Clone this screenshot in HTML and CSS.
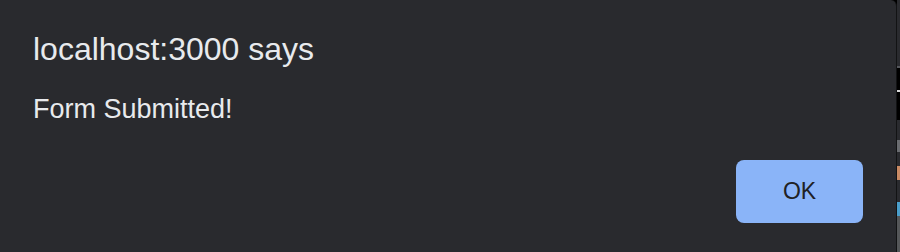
FILE: index.html
```html
<!DOCTYPE html>
<html lang="en">
<head>
    <meta charset="UTF-8">
    <title>localhost:3000 says</title>
    <link rel="stylesheet" href="styles.css">
</head>
<body>
<div class="page">
    <div class="dialog">
        <h1 class="title">localhost:3000 says</h1>
        <p class="message">Form Submitted!</p>
        <div class="buttons">
            <button class="ok">OK</button>
        </div>
    </div>
    <div class="strip">
        <span class="s1"></span>
        <span class="s2"></span>
        <span class="s3"></span>
        <span class="s4"></span>
        <span class="s5"></span>
        <span class="s6"></span>
        <span class="s7"></span>
        <span class="s8"></span>
        <span class="s9"></span>
        <span class="s10"></span>
        <span class="s11"></span>
    </div>
</div>
</body>
</html>
```

FILE: styles.css
```css
* {
    margin: 0;
    padding: 0;
    box-sizing: border-box;
}
body {
    background-color: #000;
    font-family: "Liberation Sans", Arial, sans-serif;
    overflow: hidden;
}
.page {
    display: flex;
    width: 900px;
    height: 252px;
}
.dialog {
    width: 897px;
    height: 252px;
    padding: 0 33px;
    background-color: #292a2e;
    border-right: 1px solid #121314;
    border-top-right-radius: 6px;
    color: #e8eaed;
    display: flex;
    flex-direction: column;
}
.title {
    font-size: 32px;
    font-weight: normal;
    line-height: 36px;
    margin-top: 31px;
}
.message {
    font-size: 27px;
    line-height: 30px;
    margin-top: 27px;
}
.buttons {
    display: flex;
    justify-content: flex-end;
    margin-top: 36px;
}
.ok {
    width: 127px;
    height: 63px;
    border: none;
    border-radius: 8px;
    background-color: #8ab4f8;
    color: #202124;
    font-family: "Liberation Sans", Arial, sans-serif;
    font-size: 23px;
    cursor: pointer;
}
.strip {
    width: 3px;
    display: flex;
    flex-direction: column;
}
.strip span {
    display: block;
}
.s1 { height: 66px; background: #2a2b2f; }
.s2 { height: 2px; background: #55575c; }
.s3 { height: 22px; background: #000; }
.s4 { height: 2px; background: #d8d8d8; }
.s5 { height: 28px; background: #000; }
.s6 { height: 20px; background: #2a2b2f; }
.s7 { height: 12px; background: #6a6c70; }
.s8 { height: 14px; background: #2a2b2f; }
.s9 { height: 14px; background: #c98a64; }
.s10 { height: 36px; background: #2a2b2f; border-bottom: 14px solid #4a9ecb; }
.s11 { flex: 1; background: #555759; }
```
